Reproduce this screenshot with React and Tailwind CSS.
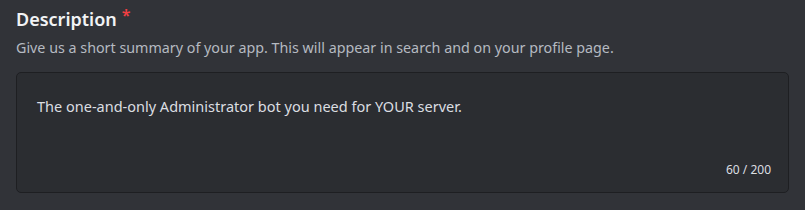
import React, { useState } from "react";

export default function App() {
  const [value, setValue] = useState(
    "The one-and-only Administrator bot you need for YOUR server."
  );

  return (
    <div
      className="w-[805px] h-[210px] bg-[#313338] px-4 pt-[6px]"
      style={{ fontFamily: '"Noto Sans", "Open Sans", sans-serif' }}
    >
      <h2 className="text-[18px] leading-[26px] font-semibold text-[#f2f3f5] flex items-start">
        Description
        <span className="text-[#f23f42] text-[16px] leading-[18px] ml-[5px]">*</span>
      </h2>
      <p className="text-[14.3px] leading-[20px] text-[#b5bac1] mt-[6px]">
        Give us a short summary of your app. This will appear in search and on
        your profile page.
      </p>
      <div className="relative mt-[14px] h-[121px] rounded-[5px] border border-[#1e1f22] bg-[#2b2d31]">
        <textarea
          className="w-full h-full resize-none bg-transparent outline-none px-5 pt-[23px] text-[14.5px] leading-[20px] text-[#dbdee1]"
          value={value}
          maxLength={200}
          onChange={(e) => setValue(e.target.value)}
        />
        <span className="absolute right-[17px] bottom-[14px] text-[12px] leading-[16px] text-[#dbdee1]">
          {value.length} / 200
        </span>
      </div>
    </div>
  );
}
